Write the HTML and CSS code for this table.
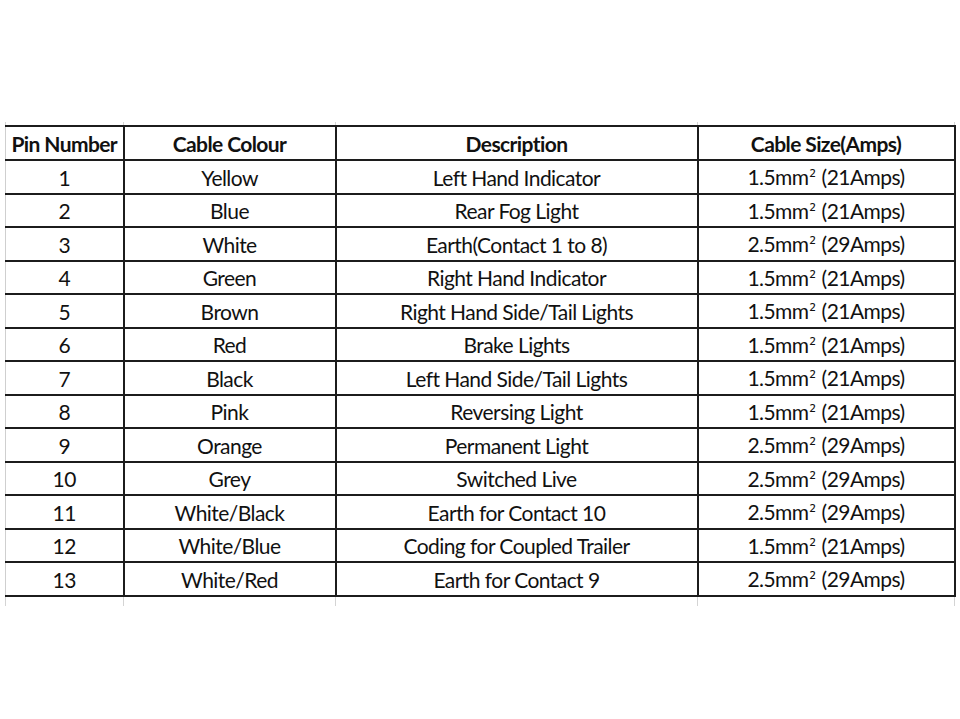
FILE: index.html
```html
<!DOCTYPE html>
<html>
<head>
<meta charset="utf-8">
<link rel="stylesheet" href="styles.css">
</head>
<body>
<table class="grid">
  <colgroup>
    <col class="c1"><col class="c2"><col class="c3"><col class="c4">
  </colgroup>
  <tr class="stub top"><td></td><td></td><td></td><td></td></tr>
  <tr class="head"><th>Pin Number</th><th>Cable Colour</th><th>Description</th><th>Cable Size(Amps)</th></tr>
  <tr><td>1</td><td>Yellow</td><td>Left Hand Indicator</td><td>1.5mm<span class="sq">²</span> (21Amps)</td></tr>
  <tr><td>2</td><td>Blue</td><td>Rear Fog Light</td><td>1.5mm<span class="sq">²</span> (21Amps)</td></tr>
  <tr><td>3</td><td>White</td><td>Earth(Contact 1 to 8)</td><td>2.5mm<span class="sq">²</span> (29Amps)</td></tr>
  <tr><td>4</td><td>Green</td><td>Right Hand Indicator</td><td>1.5mm<span class="sq">²</span> (21Amps)</td></tr>
  <tr><td>5</td><td>Brown</td><td>Right Hand Side/Tail Lights</td><td>1.5mm<span class="sq">²</span> (21Amps)</td></tr>
  <tr><td>6</td><td>Red</td><td>Brake Lights</td><td>1.5mm<span class="sq">²</span> (21Amps)</td></tr>
  <tr><td>7</td><td>Black</td><td>Left Hand Side/Tail Lights</td><td>1.5mm<span class="sq">²</span> (21Amps)</td></tr>
  <tr><td>8</td><td>Pink</td><td>Reversing Light</td><td>1.5mm<span class="sq">²</span> (21Amps)</td></tr>
  <tr><td>9</td><td>Orange</td><td>Permanent Light</td><td>2.5mm<span class="sq">²</span> (29Amps)</td></tr>
  <tr><td>10</td><td>Grey</td><td>Switched Live</td><td>2.5mm<span class="sq">²</span> (29Amps)</td></tr>
  <tr><td>11</td><td>White/Black</td><td>Earth for Contact 10</td><td>2.5mm<span class="sq">²</span> (29Amps)</td></tr>
  <tr><td>12</td><td>White/Blue</td><td>Coding for Coupled Trailer</td><td>1.5mm<span class="sq">²</span> (21Amps)</td></tr>
  <tr><td>13</td><td>White/Red</td><td>Earth for Contact 9</td><td>2.5mm<span class="sq">²</span> (29Amps)</td></tr>
  <tr class="stub bottom"><td></td><td></td><td></td><td></td></tr>
</table>
</body>
</html>
```
FILE: styles.css
```css
html, body {
  margin: 0;
  padding: 0;
  background: #ffffff;
}
body {
  padding-top: 122px;
  padding-left: 5px;
  font-family: Lato, "Open Sans", sans-serif;
  color: #111111;
}
.grid {
  border-collapse: collapse;
  table-layout: fixed;
  width: 949px;
}
.c1 { width: 118px; }
.c2 { width: 212px; }
.c3 { width: 362px; }
.c4 { width: 257px; }
.grid td, .grid th {
  border: 2px solid #1c1c1c;
  text-align: center;
  padding: 2px 0 0 0;
  height: 29.5px;
  font-size: 21px;
  font-weight: 400;
  line-height: 24px;
  white-space: nowrap;
  overflow: hidden;
  letter-spacing: -0.55px;
}
.grid th {
  font-weight: 700;
  height: 30px;
  letter-spacing: -0.6px;
}
.sq {
  font-family: "Open Sans", sans-serif;
  font-size: 18px;
  letter-spacing: 0;
  margin: 0 1px 0 1px;
}
.grid tr > :first-child {
  border-left: 1px solid #cfcfcf;
}
.grid tr > :last-child {
  border-right: 2px solid #1c1c1c;
}
.grid .stub td {
  border-top: none;
  border-bottom: none;
  border-left: 1px solid #d4d4d4;
  border-right: 1px solid #d4d4d4;
  padding: 0;
}
.grid .stub.top td { height: 3px; }
.grid .stub.bottom td { height: 9px; }
.grid .stub td:last-child { border-right: 1px solid #d4d4d4; }
```
